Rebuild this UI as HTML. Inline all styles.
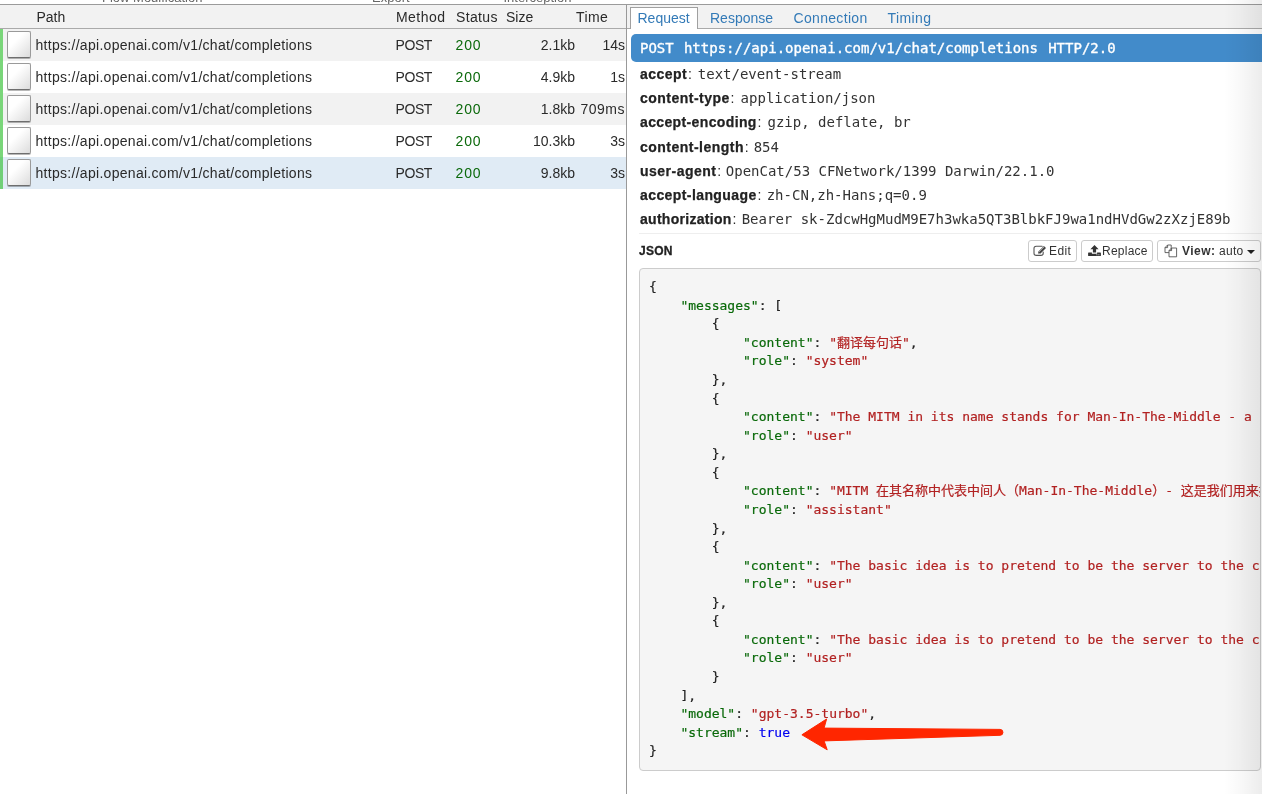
<!DOCTYPE html>
<html lang="en">
<head>
<meta charset="utf-8">
<title>mitmproxy</title>
<style>
*{box-sizing:border-box}
html,body{margin:0;padding:0}
body{transform:translateZ(0);will-change:transform;width:1262px;height:794px;overflow:hidden;background:#fff;position:relative;
  font-family:"Liberation Sans","Noto Sans CJK SC",sans-serif;font-size:14px;color:#2a2a2a;}
.abs{position:absolute}
/* top strip */
#topstrip{left:0;top:0;width:1262px;height:4px;overflow:hidden;background:#fff}
#topstrip span{position:absolute;top:-9px;line-height:13px;font-size:13px;color:#666;white-space:nowrap}
#topline{left:0;top:4px;width:1262px;height:1px;background:#9b9b9b}
/* left panel */
#left{left:0;top:5px;width:626px;height:789px;background:#fff;overflow:hidden}
#thead{left:0;top:0;width:626px;height:24px;background:#f2f2f2;border-bottom:1px solid #aaa}
#thead span{position:absolute;top:0;line-height:24px;font-size:14px;color:#2a2a2a;white-space:nowrap}
.row{position:absolute;left:0;width:626px;height:32px;border-left:3px solid #7ad67a}
.row.odd{background:#f2f2f2}
.row.sel{background:#e0ebf5;border-left-color:#70cf78}
.row span{position:absolute;top:0;line-height:32px;white-space:nowrap}
.row .ico{position:absolute;left:4px;top:2px;width:24px;height:27px;border:1px solid #9a9a9a;border-bottom:1px solid #6e6e6e;box-shadow:0 1px 0 rgba(0,0,0,.28);border-radius:2px;
  background:linear-gradient(135deg,#ffffff 35%,#dcdcdc 100%)}
.path{left:32.5px;letter-spacing:.29px}
.method{left:392.5px;letter-spacing:-.4px}
.status{left:452.5px;color:#0b690b;letter-spacing:.9px}
.size{right:51px;text-align:right}
.time{right:1px;text-align:right}
/* divider */
#divider{left:626px;top:5px;width:1px;height:789px;background:#999}
/* right panel */
#right{left:627px;top:5px;width:635px;height:789px;background:#fff;overflow:hidden}
#tabs{left:0;top:0;width:635px;height:24px;background:#f2f2f2;border-bottom:1px solid #aaa}
#tabs span{position:absolute;top:3px;height:21px;line-height:20px;font-size:14px;color:#337ab7;white-space:nowrap}
#tabs .active{left:3px;width:68px;top:2px;height:22px;line-height:21px;background:#fff;border:1px solid #a0a0a0;border-bottom:none;padding-left:6.5px}
#firstline{left:4px;top:29px;width:640px;height:28px;background:#428bca;border-radius:5px;color:#fff;
  font-family:"DejaVu Sans Mono","Liberation Mono",monospace;font-size:14px;line-height:28px;padding-left:9px;white-space:pre;word-spacing:1.8px;-webkit-text-stroke:.35px #fff}
.hdr{position:absolute;left:13px;width:640px;height:24px;line-height:24px;white-space:pre;font-size:14px}
.hdr b{font-weight:bold;color:#222;letter-spacing:.48px;-webkit-text-stroke:.25px #222}
.hdr i{font-style:normal;margin-left:.8px}
.hdr code{position:absolute;top:0;font-family:"DejaVu Sans Mono","Liberation Mono",monospace;font-size:14px;color:#333}
#hr{left:12px;top:228px;width:623px;height:1px;background:#eee}
#jsonlbl{left:12px;top:237px;letter-spacing:.25px;-webkit-text-stroke:.3px;color:#222;font-size:12px;font-weight:bold;line-height:18px}
.btn{position:absolute;top:235px;height:22px;border:1px solid #ccc;border-radius:3px;background:#fff;font-size:12px;line-height:20px;color:#333;white-space:nowrap;padding:0}
#pre{left:12px;top:263px;width:622px;height:503px;background:#f5f5f5;border:1px solid #ccc;border-radius:4px;
  padding:9.2px 9.1px;margin:0;-webkit-text-stroke:.2px;font-family:"DejaVu Sans Mono","Noto Sans CJK SC","Liberation Mono",monospace;font-size:13px;line-height:18.57px;color:#222;white-space:pre;overflow:hidden}
.k{color:#0a6a0a}.s{color:#b22222}.c{color:#0000f0}
#shade{left:1224px;top:0;width:38px;height:794px;background:linear-gradient(90deg,rgba(0,0,0,0) 0%,rgba(0,0,0,0.025) 40%,rgba(0,0,0,0.075) 100%)}
</style>
</head>
<body>
<div id="topstrip" class="abs"><span style="left:102px">Flow Modification</span><span style="left:372px">Export</span><span style="left:503.5px">Interception</span></div>
<div id="topline" class="abs"></div>

<div id="left" class="abs">
  <div id="thead" class="abs"><span style="left:36.5px">Path</span><span style="left:396px;letter-spacing:.45px">Method</span><span style="left:456px;letter-spacing:.35px">Status</span><span style="left:506px">Size</span><span style="left:576px;letter-spacing:.4px">Time</span></div>
  <div class="row odd" style="top:24px"><i class="ico"></i><span class="path">https://api.openai.com/v1/chat/completions</span><span class="method">POST</span><span class="status">200</span><span class="size">2.1kb</span><span class="time">14s</span></div>
  <div class="row" style="top:56px"><i class="ico"></i><span class="path">https://api.openai.com/v1/chat/completions</span><span class="method">POST</span><span class="status">200</span><span class="size">4.9kb</span><span class="time">1s</span></div>
  <div class="row odd" style="top:88px"><i class="ico"></i><span class="path">https://api.openai.com/v1/chat/completions</span><span class="method">POST</span><span class="status">200</span><span class="size">1.8kb</span><span class="time" style="letter-spacing:.5px">709ms</span></div>
  <div class="row" style="top:120px"><i class="ico"></i><span class="path">https://api.openai.com/v1/chat/completions</span><span class="method">POST</span><span class="status">200</span><span class="size">10.3kb</span><span class="time">3s</span></div>
  <div class="row sel" style="top:152px"><i class="ico"></i><span class="path">https://api.openai.com/v1/chat/completions</span><span class="method">POST</span><span class="status">200</span><span class="size">9.8kb</span><span class="time">3s</span></div>
</div>
<div id="divider" class="abs"></div>

<div id="right" class="abs">
  <div id="tabs" class="abs"><span class="active">Request</span><span style="left:83px">Response</span><span style="left:166.5px;letter-spacing:.32px">Connection</span><span style="left:260.5px;letter-spacing:.4px">Timing</span></div>
  <div id="firstline" class="abs">POST https://api.openai.com/v1/chat/completions HTTP/2.0</div>
  <div class="hdr" style="top:57.00px"><b>accept</b><i>: </i><code style="left:57.8px">text/event-stream</code></div>
  <div class="hdr" style="top:81.15px"><b>content-type</b><i>: </i><code style="left:100.6px">application/json</code></div>
  <div class="hdr" style="top:105.30px"><b style="letter-spacing:.37px">accept-encoding</b><i>: </i><code style="left:127.5px">gzip, deflate, br</code></div>
  <div class="hdr" style="top:130px"><b>content-length</b><i>: </i><code style="left:113.7px">854</code></div>
  <div class="hdr" style="top:153.60px"><b>user-agent</b><i>: </i><code style="left:85.8px">OpenCat/53 CFNetwork/1399 Darwin/22.1.0</code></div>
  <div class="hdr" style="top:177.75px"><b style="letter-spacing:.41px">accept-language</b><i>: </i><code style="left:126.7px">zh-CN,zh-Hans;q=0.9</code></div>
  <div class="hdr" style="top:201.90px"><b style="letter-spacing:.29px">authorization</b><i>: </i><code style="left:101.7px">Bearer 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</code></div>
  <div id="hr" class="abs"></div>
  <div id="jsonlbl" class="abs">JSON</div>
  <div class="btn" style="left:401px;width:49px">
    <svg class="abs" style="left:4px;top:4px" width="14" height="12" viewBox="0 0 14 12"><path d="M9.2 1.2 H3.2 Q1 1.2 1 3.4 V8.2 Q1 10.4 3.2 10.4 H8 Q10.2 10.4 10.2 8.2 V7" fill="none" stroke="#555" stroke-width="1.1" stroke-linecap="round"/><path d="M5 8.6 L5.5 6.4 L10.9 1 L13 3.1 L7.6 8.5 Z" fill="#444"/><path d="M6.1 6.9 L11 2" stroke="#fff" stroke-width=".5"/></svg>
    <span class="abs" style="left:20px;top:0;letter-spacing:.4px">Edit</span></div>
  <div class="btn" style="left:454px;width:72px">
    <svg class="abs" style="left:6px;top:4px" width="13" height="12" viewBox="0 0 13 12"><path d="M6.5 0 L10.6 4.3 H8.1 V7.6 H4.9 V4.3 H2.4 Z" fill="#333"/><path d="M0.6 7.6 H3.9 V8.7 H9.1 V7.6 H12.4 Q12.9 7.6 12.9 8.1 V10.6 Q12.9 11.1 12.4 11.1 H0.6 Q0.1 11.1 0.1 10.6 V8.1 Q0.1 7.6 0.6 7.6 Z" fill="#333"/><circle cx="10.9" cy="9.7" r=".55" fill="#fff"/><circle cx="8.9" cy="9.7" r=".55" fill="#fff"/></svg>
    <span class="abs" style="left:20px;top:0;letter-spacing:.25px">Replace</span></div>
  <div class="btn" style="left:530px;width:104px">
    <svg class="abs" style="left:6px;top:3px" width="14" height="14" viewBox="0 0 14 14"><path d="M3.6 1 H7.2 V8.6 H1 V3.6 Z M1 3.6 H3.6 V1" fill="#fff" stroke="#555" stroke-width=".9" stroke-linejoin="round"/><path d="M7.6 4 H12.6 V12.8 H5 V6.6 Z M5 6.6 H7.6 V4" fill="#fff" stroke="#555" stroke-width=".9" stroke-linejoin="round"/></svg>
    <span class="abs" style="left:24px;top:0"><b style="letter-spacing:.45px">View:</b></span><span class="abs" style="left:61px;top:0;letter-spacing:.3px">auto</span>
    <svg class="abs" style="left:89px;top:9px" width="8" height="4" viewBox="0 0 8 4"><path d="M0 0 H8 L4 4 Z" fill="#222"/></svg></div>
<pre id="pre" class="abs">{
    <span class="k">"messages"</span>: [
        {
            <span class="k">"content"</span>: <span class="s">"翻译每句话"</span>,
            <span class="k">"role"</span>: <span class="s">"system"</span>
        },
        {
            <span class="k">"content"</span>: <span class="s">"The MITM in its name stands for Man-In-The-Middle - a reference to the process we use</span>
            <span class="k">"role"</span>: <span class="s">"user"</span>
        },
        {
            <span class="k">"content"</span>: <span class="s">"MITM 在其名称中代表中间人（Man-In-The-Middle）- 这是我们用来拦截和干扰这些理论上不透明的数据流的过程</span>
            <span class="k">"role"</span>: <span class="s">"assistant"</span>
        },
        {
            <span class="k">"content"</span>: <span class="s">"The basic idea is to pretend to be the server to the client, and pretend to be the client</span>
            <span class="k">"role"</span>: <span class="s">"user"</span>
        },
        {
            <span class="k">"content"</span>: <span class="s">"The basic idea is to pretend to be the server to the client, and pretend to be the client</span>
            <span class="k">"role"</span>: <span class="s">"user"</span>
        }
    ],
    <span class="k">"model"</span>: <span class="s">"gpt-3.5-turbo"</span>,
    <span class="k">"stream"</span>: <span class="c">true</span>
}</pre>
  <svg class="abs" style="left:173px;top:705px" width="210" height="50" viewBox="800 710 210 50">
    <path d="M801.9 734.8 L826.6 719 L824.1 728.1 L1000 729.4 A2.9 2.9 0 0 1 1000 735.3 L824.1 740.9 L827.2 749.8 Z" fill="#ff2600" stroke="#ff2600" stroke-width="1" stroke-linejoin="round"/>
  </svg>
</div>
<div id="shade" class="abs"></div>
</body>
</html>
